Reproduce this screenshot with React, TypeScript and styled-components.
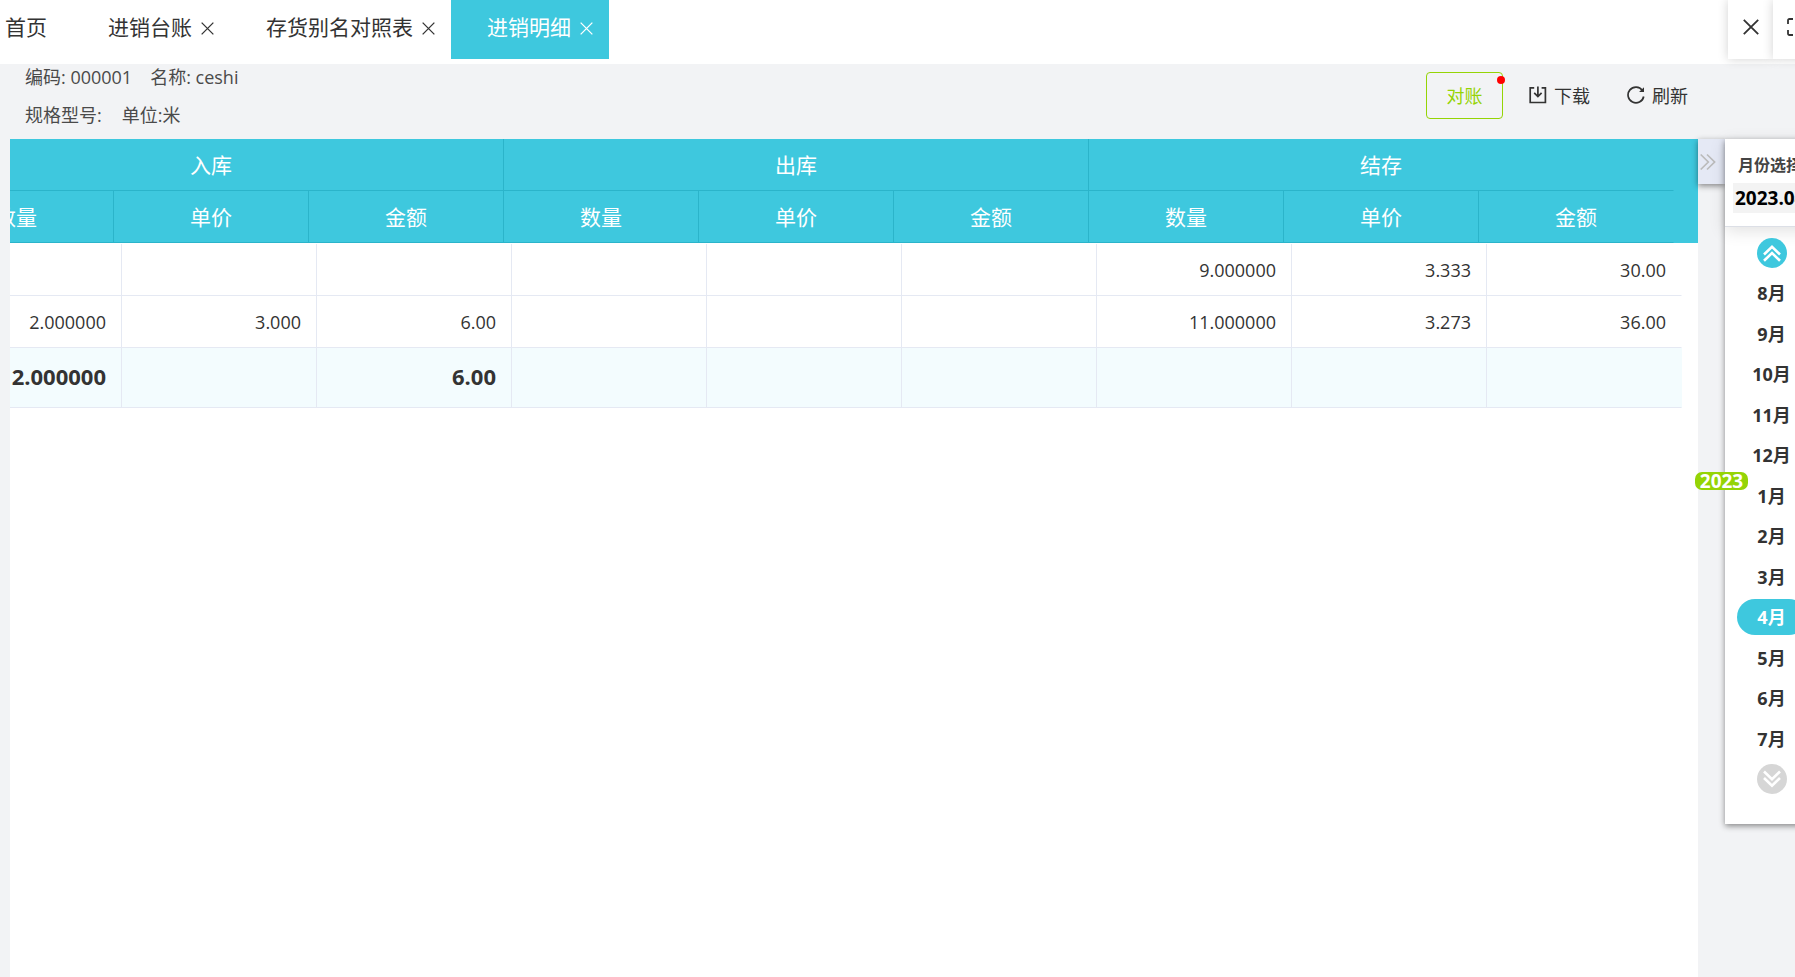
import React from 'react';
import styled, { createGlobalStyle, css } from 'styled-components';

const color = {
  cyan: '#3ec8de',
  cyanLine: '#2bb4ca',
  green: '#95d405',
  page: '#f2f3f5',
  line: '#e5e9f3',
  text: '#333333',
};

const GlobalStyle = createGlobalStyle`
  *, *::before, *::after { box-sizing: border-box; }
  body {
    margin: 0;
    background: ${color.page};
    color: ${color.text};
    font-family: "Open Sans", "Noto Sans CJK SC", sans-serif;
    font-size: 18px;
  }
  button, input { font: inherit; color: inherit; }
  button { margin: 0; padding: 0; border: 0; background: none; cursor: pointer; }
`;

const Viewport = styled.div`
  overflow: hidden;
  min-height: 100vh;
  display: flex;
`;

/* The workspace is slightly wider than the window, its right edge is cut off. */
const Shell = styled.div`
  flex: none;
  width: calc(100% + 23px);
  display: flex;
  flex-direction: column;
`;

const TopBar = styled.header`
  display: flex;
  justify-content: space-between;
  align-items: flex-start;
  height: 64px;
  background: #fff;
`;

const Tabs = styled.nav`
  display: flex;
`;

const Tab = styled.div<{ $active?: boolean; $home?: boolean }>`
  display: flex;
  align-items: center;
  gap: 9px;
  height: 59px;
  padding: 0 16px 6px 36px;
  font-size: 21px;
  line-height: 30px;
  ${p => p.$home && css`padding: 0 25px 6px 5px;`}
  ${p => p.$active && css`background: ${color.cyan}; color: #fff;`}
`;

const TabLink = styled.a`
  color: inherit;
  text-decoration: none;
  white-space: nowrap;
`;

const TabClose = styled.button`
  display: flex;
  padding-top: 4px;
`;

const WindowButtons = styled.div`
  display: flex;
`;

const WindowButton = styled.button`
  display: flex;
  align-items: center;
  justify-content: center;
  width: 45px;
  height: 59px;
  padding-bottom: 6px;
  background: #fff;
  box-shadow: 0 0 10px rgba(0, 0, 0, 0.18);
`;

const Toolbar = styled.section`
  display: flex;
  justify-content: space-between;
  height: 75px;
  padding: 0 130px 0 25px;
`;

const Info = styled.div`
  color: #4a4a4a;
`;

const InfoLine = styled.div<{ $wide?: boolean }>`
  display: flex;
  gap: ${p => (p.$wide ? 20 : 18)}px;
  height: 38px;
  line-height: 26px;
  white-space: pre;
`;

const Actions = styled.div`
  display: flex;
  align-items: flex-start;
  gap: 37px;
  padding-top: 8px;
`;

const ReconcileButton = styled.button`
  position: relative;
  width: 77px;
  height: 47px;
  margin-right: -11px;
  padding-bottom: 2px;
  border: 1px solid ${color.green};
  border-radius: 4px;
  color: ${color.green};
`;

const Dot = styled.span`
  position: absolute;
  top: 3px;
  right: -3px;
  width: 8px;
  height: 8px;
  border-radius: 50%;
  background: #f00;
`;

const ToolButton = styled.button`
  display: flex;
  align-items: center;
  gap: 7px;
  height: 47px;
  padding-bottom: 2px;
  white-space: nowrap;
`;

const Main = styled.main`
  flex: 1;
  display: flex;
  align-items: stretch;
  padding-left: 10px;
`;

const Sheet = styled.div`
  flex: 1;
  min-width: 0;
  background: #fff;
`;

const HeadArea = styled.div`
  display: flex;
  justify-content: flex-end;
  overflow: hidden;
  padding-right: 24px;
  background: ${color.cyan};
`;

const BodyArea = styled.div`
  display: flex;
  justify-content: flex-end;
  overflow: hidden;
  padding: 1px 16px 0 0;
`;

const Grid = styled.table`
  flex: none;
  width: 1755px;
  table-layout: fixed;
  border-collapse: separate;
  border-spacing: 0;
`;

const HeadCell = styled.th<{ $last?: boolean }>`
  height: 52px;
  padding: 0;
  border-right: 1px solid ${p => (p.$last ? 'transparent' : color.cyanLine)};
  border-bottom: 1px solid ${color.cyanLine};
  color: #fff;
  font-size: 21px;
  font-weight: 400;
  line-height: 30px;
  text-align: center;
`;

const Row = styled.tr<{ $total?: boolean }>`
  height: ${p => (p.$total ? 60 : 52)}px;
  ${p => p.$total && css`
    background: #f3fcfe;
    font-size: 22px;
    font-weight: 700;
    td { padding-bottom: 4px; }
  `}
`;

const Cell = styled.td`
  padding: 0 15px;
  border-right: 1px solid ${color.line};
  border-bottom: 1px solid ${color.line};
  line-height: 30px;
  text-align: right;
  &:last-child { border-right-color: transparent; }
`;

const Side = styled.aside`
  display: flex;
  align-items: flex-start;
`;

const CollapseButton = styled.button`
  display: flex;
  align-items: center;
  width: 27px;
  height: 45px;
  padding-left: 2px;
  background: #e5e9f5;
  color: #bbb;
  box-shadow: 0 2px 6px rgba(0, 0, 0, 0.45);
`;

const MonthPanel = styled.section`
  position: relative;
  width: 93px;
  height: 685px;
  background: #fff;
  box-shadow: 0 2px 6px rgba(0, 0, 0, 0.45);
`;

const MonthHead = styled.div`
  height: 88px;
  padding: 14px 8px 0;
  border-bottom: 1px solid #dcdfe6;
  box-shadow: 0 4px 16px rgba(0, 0, 0, 0.12);
`;

const MonthLabel = styled.label`
  display: block;
  height: 30px;
  padding-left: 5px;
  color: #444;
  font-size: 16px;
  font-weight: 700;
  line-height: 24px;
  white-space: nowrap;
`;

const MonthInput = styled.input`
  display: block;
  width: 77px;
  height: 30px;
  padding: 0 2px;
  border: 0;
  background: #f3f3f3;
  color: #000;
  font-size: 19px;
  font-weight: 700;
`;

const MonthBody = styled.div`
  display: flex;
  flex-direction: column;
  align-items: center;
  padding-top: 11px;
`;

const RoundButton = styled.button<{ $muted?: boolean }>`
  display: flex;
  align-items: center;
  justify-content: center;
  width: 30px;
  height: 30px;
  border-radius: 50%;
  background: ${p => (p.$muted ? '#d6d6d6' : color.cyan)};
  color: #fff;
`;

const MonthList = styled.ul`
  display: flex;
  flex-direction: column;
  height: 486px;
  margin: 5px 0;
  padding: 0;
  list-style: none;
`;

const MonthItem = styled.li`
  flex: 1;
  display: flex;
  align-items: center;
`;

const MonthButton = styled.button<{ $active?: boolean }>`
  width: 70px;
  height: 36px;
  padding-bottom: 2px;
  border-radius: 18px;
  font-weight: 700;
  ${p => p.$active && css`background: ${color.cyan}; color: #fff;`}
`;

const YearBadge = styled.span`
  position: absolute;
  top: 333px;
  left: -30px;
  width: 53px;
  height: 18px;
  border-radius: 7px;
  background: ${color.green};
  color: #fff;
  font-size: 19px;
  font-weight: 700;
  line-height: 18px;
  text-align: center;
`;

const Cross = ({ size, weight = 1.4 }: { size: number; weight?: number }) => (
  <svg width={size} height={size} viewBox="0 0 14 14" fill="none" stroke="currentColor" strokeWidth={weight}>
    <path d="M0.7 0.7 13.3 13.3M13.3 0.7 0.7 13.3" />
  </svg>
);

const Expand = () => (
  <svg width="18" height="18" viewBox="0 0 18 18" fill="none" stroke="currentColor" strokeWidth="1.8">
    <path d="M1 6V2.5Q1 1 2.5 1H6M12 1h3.5Q17 1 17 2.5V6M17 12v3.5Q17 17 15.5 17H12M6 17H2.5Q1 17 1 15.5V12" />
  </svg>
);

const Download = () => (
  <svg width="18" height="18" viewBox="0 0 18 18" fill="none" stroke="currentColor" strokeWidth="1.7">
    <path d="M5.2 1.8H1.2V16.5H16.4V1.8H12.6M8.9 0.5V10.5M5.2 6.8 8.9 10.5 12.6 6.8" />
  </svg>
);

const Refresh = () => (
  <svg width="18" height="18" viewBox="0 0 18 18" fill="none" stroke="currentColor" strokeWidth="1.7">
    <path d="M16.7 10.5A7.9 7.9 0 1 1 15.4 4.4" />
    <path d="M17 1.3V6H12.1Z" fill="currentColor" stroke="none" />
  </svg>
);

const Chevrons = () => (
  <svg width="16" height="18" viewBox="0 0 16 18" fill="none" stroke="currentColor" strokeWidth="1.7">
    <path d="M0.7 1.5 8.3 9 0.7 16.5M7 1.5 14.6 9 7 16.5" />
  </svg>
);

const DoubleArrow = ({ down }: { down?: boolean }) => (
  <svg width="18" height="18" viewBox="0 0 18 18" fill="none" stroke="currentColor" strokeWidth="2.6">
    <path d={down ? 'M1 1.5 9 9.2 17 1.5M1 8 9 15.7 17 8' : 'M1 10.5 9 2.8 17 10.5M1 16.8 9 9.1 17 16.8'} />
  </svg>
);

const tabs = ['进销台账', '存货别名对照表', '进销明细'];
const groups = ['入库', '出库', '结存'];
const fields = ['数量', '单价', '金额'];
const rows = [
  ['', '', '', '', '', '', '9.000000', '3.333', '30.00'],
  ['2.000000', '3.000', '6.00', '', '', '', '11.000000', '3.273', '36.00'],
];
const total = ['2.000000', '', '6.00', '', '', '', '', '', ''];
const months = [8, 9, 10, 11, 12, 1, 2, 3, 4, 5, 6, 7];

export default function App() {
  return (
    <Viewport>
      <GlobalStyle />
      <Shell>
        <TopBar>
          <Tabs>
            <Tab $home><TabLink href="#home">首页</TabLink></Tab>
            {tabs.map((name, i) => (
              <Tab key={name} $active={i === 2}>
                <TabLink href={`#tab-${i}`}>{name}</TabLink>
                <TabClose aria-label="关闭"><Cross size={13} /></TabClose>
              </Tab>
            ))}
          </Tabs>
          <WindowButtons>
            <WindowButton aria-label="关闭全部"><Cross size={16} weight={1.6} /></WindowButton>
            <WindowButton aria-label="全屏"><Expand /></WindowButton>
          </WindowButtons>
        </TopBar>

        <Toolbar>
          <Info>
            <InfoLine><span>编码: 000001</span><span>名称: ceshi</span></InfoLine>
            <InfoLine $wide><span>规格型号:</span><span>单位:米</span></InfoLine>
          </Info>
          <Actions>
            <ReconcileButton>对账<Dot /></ReconcileButton>
            <ToolButton><Download />下载</ToolButton>
            <ToolButton><Refresh />刷新</ToolButton>
          </Actions>
        </Toolbar>

        <Main>
          <Sheet>
            <HeadArea>
              <Grid>
                <thead>
                  <tr>
                    {groups.map((g, i) => <HeadCell key={g} colSpan={3} $last={i === 2}>{g}</HeadCell>)}
                  </tr>
                  <tr>
                    {groups.map((g, i) => fields.map((f, j) => (
                      <HeadCell key={g + f} $last={i === 2 && j === 2}>{f}</HeadCell>
                    )))}
                  </tr>
                </thead>
              </Grid>
            </HeadArea>
            <BodyArea>
              <Grid>
                <tbody>
                  {rows.map((r, i) => (
                    <Row key={i}>{r.map((v, j) => <Cell key={j}>{v}</Cell>)}</Row>
                  ))}
                  <Row $total>{total.map((v, j) => <Cell key={j}>{v}</Cell>)}</Row>
                </tbody>
              </Grid>
            </BodyArea>
          </Sheet>

          <Side>
            <CollapseButton aria-label="收起"><Chevrons /></CollapseButton>
            <MonthPanel>
              <MonthHead>
                <MonthLabel htmlFor="month">月份选择</MonthLabel>
                <MonthInput id="month" defaultValue="2023.04" />
              </MonthHead>
              <MonthBody>
                <RoundButton aria-label="向前"><DoubleArrow /></RoundButton>
                <MonthList>
                  {months.map(m => (
                    <MonthItem key={m}><MonthButton $active={m === 4}>{m}月</MonthButton></MonthItem>
                  ))}
                </MonthList>
                <RoundButton $muted aria-label="向后"><DoubleArrow down /></RoundButton>
              </MonthBody>
              <YearBadge>2023</YearBadge>
            </MonthPanel>
          </Side>
        </Main>
      </Shell>
    </Viewport>
  );
}
